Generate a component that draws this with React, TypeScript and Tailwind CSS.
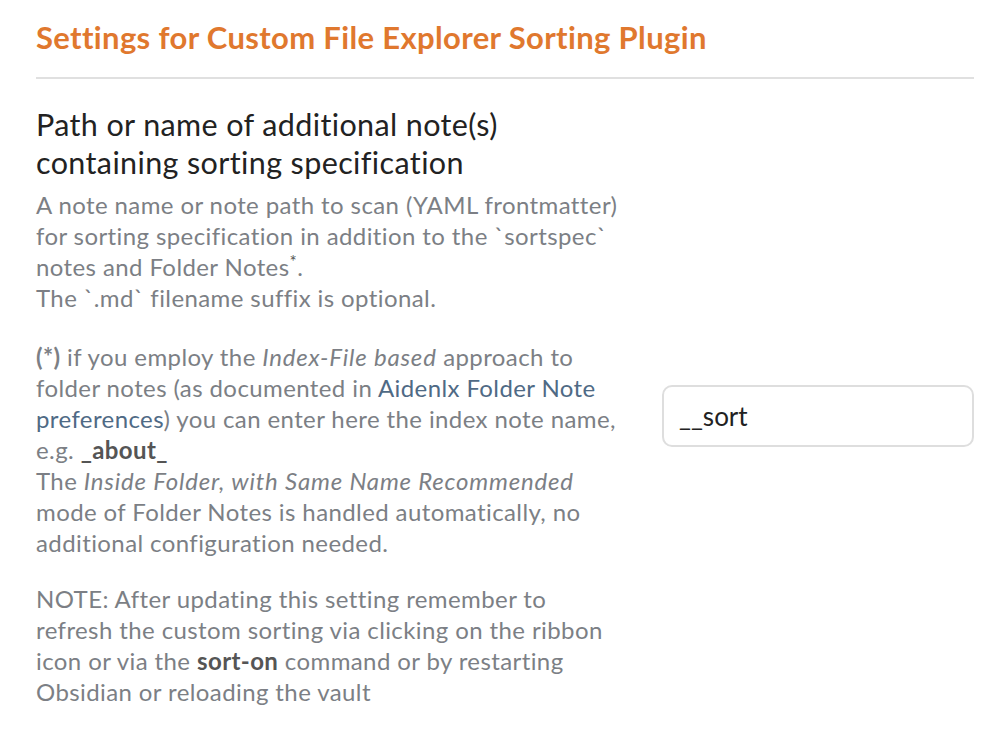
import React from 'react';

const App: React.FC = () => {
    return (
        <div className="min-h-screen w-full bg-white pl-[36px] pr-[27px] pt-[15px] font-['Lato','Noto_Sans',sans-serif]">
            {/* Plugin title */}
            <h2 className="text-[31px] leading-[44px] font-bold text-[#e0782e] tracking-[0.35px]">
                Settings for Custom File Explorer Sorting Plugin
            </h2>
            <hr className="mt-[18px] border-0 border-t-2 border-[#e0e0e0]" />

            {/* Setting item */}
            <div className="flex items-center gap-[32px] pt-[26px]">
                <div className="flex-1 min-w-0">
                    <div className="text-[30.5px] leading-[38px] text-[#222222] tracking-[0.38px]">
                        Path or name of additional note(s)
                        <br />
                        containing sorting specification
                    </div>
                    <div className="mt-[8px] text-[24px] leading-[31px] text-[#7c7f85] tracking-[0.4px] whitespace-nowrap">
                        A note name or note path to scan (YAML frontmatter)
                        <br />
                        for sorting specification in addition to the `sortspec`
                        <br />
                        notes and Folder Notes<sup className="text-[17px] text-[#555]">*</sup>.
                        <br />
                        The `.md` filename suffix is optional.
                        <p className="mt-[28px]">
                            <b className="font-bold">(*)</b> if you employ the <i className="tracking-[0.8px]">Index-File based</i> approach to
                            <br />
                            folder notes (as documented in <a className="text-[#4f6a85]">Aidenlx Folder Note</a>
                            <br />
                            <a className="text-[#4f6a85]">preferences</a>) you can enter here the index note name,
                            <br />
                            e.g. <b className="font-bold text-[#555]">_about_</b>
                            <br />
                            The <i className="tracking-[0.8px]">Inside Folder, with Same Name Recommended</i>
                            <br />
                            mode of Folder Notes is handled automatically, no
                            <br />
                            additional configuration needed.
                        </p>
                        <p className="mt-[25px]">
                            NOTE: After updating this setting remember to
                            <br />
                            refresh the custom sorting via clicking on the ribbon
                            <br />
                            icon or via the <b className="font-bold text-[#555]">sort-on</b> command or by restarting
                            <br />
                            Obsidian or reloading the vault
                        </p>
                    </div>
                </div>
                <div className="shrink-0 mt-[20px]">
                    <input
                        type="text"
                        defaultValue="__sort"
                        className="w-[312px] h-[62px] rounded-[10px] border-2 border-[#dedede] bg-white px-[15px] text-[26px] text-[#222222] outline-none"
                    />
                </div>
            </div>
        </div>
    );
};

export default App;
